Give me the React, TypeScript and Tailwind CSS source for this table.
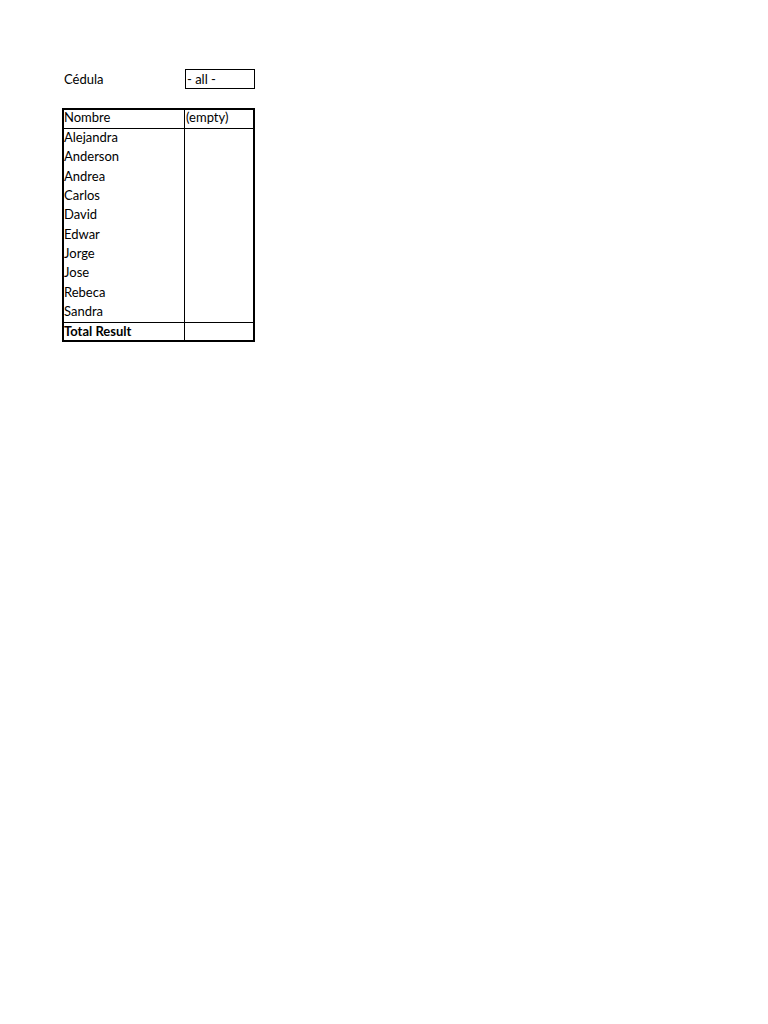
import React from 'react';

const nombres = ['Alejandra', 'Anderson', 'Andrea', 'Carlos', 'David', 'Edwar', 'Jorge', 'Jose', 'Rebeca', 'Sandra'];

const App: React.FC = () => {
  return (
    <div className="min-h-[1024px] w-[768px] bg-white text-[13px] leading-none text-black" style={{ fontFamily: 'Lato, "Open Sans", sans-serif' }}>
      <div className="pl-[62px] pt-[69px]">
        {/* Filtro */}
        <div className="flex h-[20px] items-center">
          <div className="w-[123px] pl-[2px]">Cédula</div>
          <div className="flex h-[20px] w-[70px] items-center border border-black pl-[1px]">- all -</div>
        </div>

        {/* Tabla */}
        <div className="mt-[19px] w-[193px] border-2 border-black">
          <div className="flex h-[19px] border-b border-black">
            <div className="flex w-[121px] items-center border-r border-black pb-[3px]">Nombre</div>
            <div className="flex flex-1 items-center pl-[1px] pb-[3px]">(empty)</div>
          </div>
          {nombres.map(n => (
            <div key={n} className="flex h-[19.3px]">
              <div className="flex w-[121px] items-center border-r border-black pb-[2px]">{n}</div>
              <div className="flex-1" />
            </div>
          ))}
          <div className="flex h-[18px] border-t border-black font-bold">
            <div className="flex w-[121px] items-center border-r border-black">Total Result</div>
            <div className="flex-1" />
          </div>
        </div>
      </div>
    </div>
  );
};

export default App;
